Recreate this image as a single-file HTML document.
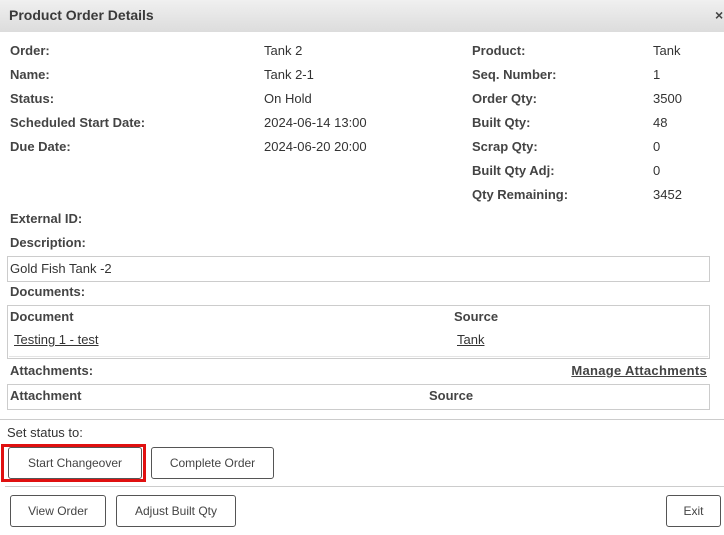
<!DOCTYPE html>
<html><head><style>
*{box-sizing:border-box;margin:0;padding:0}
body{width:724px;height:535px;background:#fff;font-family:"Liberation Sans",sans-serif;font-size:13px;color:#333;position:relative;overflow:hidden}
.a{position:absolute;white-space:nowrap;line-height:18px}
.b{font-weight:bold;color:#444}
.hdr{position:absolute;left:0;top:0;width:724px;height:32px;background:linear-gradient(#f0f0f0,#dcdcdc);}
.box{position:absolute;border:1px solid #ccc}
.btn{position:absolute;border:1px solid #555;border-radius:3px;background:#fff;font-size:12px;color:#444;text-align:center}
a{color:#333;text-decoration:underline}
</style></head><body>
<div class="hdr"></div>
<div class="a b" style="left:9px;top:6px;font-size:14px;color:#3a3a3a">Product Order Details</div>
<div class="a b" style="left:715px;top:6px;font-size:14px">×</div>

<div class="a b" style="left:10px;top:42px">Order:</div><div class="a" style="left:264px;top:42px">Tank 2</div>
<div class="a b" style="left:10px;top:66px">Name:</div><div class="a" style="left:264px;top:66px">Tank 2-1</div>
<div class="a b" style="left:10px;top:90px">Status:</div><div class="a" style="left:264px;top:90px">On Hold</div>
<div class="a b" style="left:10px;top:114px">Scheduled Start Date:</div><div class="a" style="left:264px;top:114px">2024-06-14 13:00</div>
<div class="a b" style="left:10px;top:138px">Due Date:</div><div class="a" style="left:264px;top:138px">2024-06-20 20:00</div>

<div class="a b" style="left:472px;top:42px">Product:</div><div class="a" style="left:653px;top:42px">Tank</div>
<div class="a b" style="left:472px;top:66px">Seq. Number:</div><div class="a" style="left:653px;top:66px">1</div>
<div class="a b" style="left:472px;top:90px">Order Qty:</div><div class="a" style="left:653px;top:90px">3500</div>
<div class="a b" style="left:472px;top:114px">Built Qty:</div><div class="a" style="left:653px;top:114px">48</div>
<div class="a b" style="left:472px;top:138px">Scrap Qty:</div><div class="a" style="left:653px;top:138px">0</div>
<div class="a b" style="left:472px;top:162px">Built Qty Adj:</div><div class="a" style="left:653px;top:162px">0</div>
<div class="a b" style="left:472px;top:186px">Qty Remaining:</div><div class="a" style="left:653px;top:186px">3452</div>

<div class="a b" style="left:10px;top:210px">External ID:</div>
<div class="a b" style="left:10px;top:234px">Description:</div>
<div class="box" style="left:7px;top:256px;width:703px;height:26px"></div>
<div class="a" style="left:10px;top:260px">Gold Fish Tank -2</div>
<div class="a b" style="left:10px;top:283px">Documents:</div>
<div class="box" style="left:7px;top:305px;width:703px;height:54px"></div>
<div style="position:absolute;left:9px;top:356px;width:699px;height:1px;background:#e4e4e4"></div>
<div class="a b" style="left:10px;top:308px">Document</div>
<div class="a b" style="left:454px;top:308px">Source</div>
<div class="a" style="left:14px;top:331px"><a>Testing 1 - test</a></div>
<div class="a" style="left:457px;top:331px"><a>Tank</a></div>
<div class="a b" style="left:10px;top:362px">Attachments:</div>
<div class="a b" style="right:17px;top:362px;letter-spacing:0.3px"><a style="color:#444">Manage Attachments</a></div>
<div class="box" style="left:7px;top:384px;width:703px;height:26px"></div>
<div class="a b" style="left:10px;top:387px">Attachment</div>
<div class="a b" style="left:429px;top:387px">Source</div>
<div style="position:absolute;left:0;top:419px;width:724px;height:1px;background:#ccc"></div>
<div class="a" style="left:7px;top:424px">Set status to:</div>
<div style="position:absolute;left:1px;top:444px;width:145px;height:38px;border:3px solid #e01010"></div>
<div class="btn" style="left:8px;top:447px;width:134px;height:32px;line-height:30px">Start Changeover</div>
<div class="btn" style="left:151px;top:447px;width:123px;height:32px;line-height:30px">Complete Order</div>
<div style="position:absolute;left:5px;top:486px;width:719px;height:1px;background:#ccc"></div>
<div class="btn" style="left:10px;top:495px;width:96px;height:32px;line-height:30px">View Order</div>
<div class="btn" style="left:116px;top:495px;width:120px;height:32px;line-height:30px">Adjust Built Qty</div>
<div class="btn" style="left:666px;top:495px;width:55px;height:32px;line-height:30px">Exit</div>
</body></html>
